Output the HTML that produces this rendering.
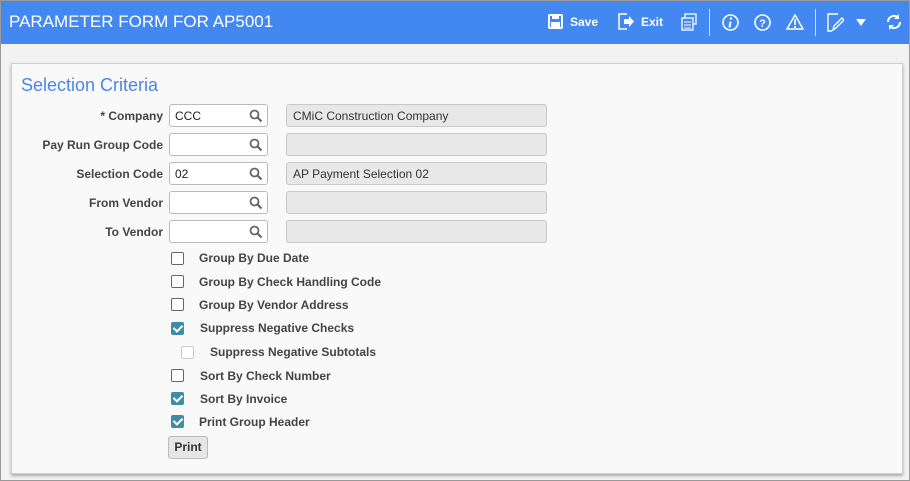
<!DOCTYPE html>
<html><head><style>
*{box-sizing:border-box;margin:0;padding:0}
body{width:910px;height:481px;background:#f2f2f2;font-family:"Liberation Sans",Arial,sans-serif;position:relative;overflow:hidden}
.frame{position:absolute;left:0;top:0;width:910px;height:481px;border:1px solid #999;z-index:5;pointer-events:none}
.hdr{position:absolute;left:0;top:0;width:910px;height:44px;background:#4288f0}
.title{position:absolute;left:9px;top:12px;color:#fff;font-size:17px}
.tb{position:absolute;color:#fff;font-weight:bold;font-size:12px;top:15px}
.sep{position:absolute;top:9px;width:1px;height:27px;background:#cfe0fb}
.panel{position:absolute;left:11px;top:63px;width:892px;height:411px;background:#f9f9f9;border:1px solid #d0d0d0;box-shadow:0 2px 3px #aaa}
.h2{position:absolute;left:21px;top:75px;font-size:18px;color:#4a86e8}
.lbl{position:absolute;right:747px;font-size:12px;font-weight:bold;color:#444}
.inp{position:absolute;left:169px;width:99px;height:23px;background:#fff;border:1px solid #bbb;border-radius:3px;font-size:12px;padding:4px 5px;color:#222}
.inp svg{position:absolute;right:4px;top:4px}
.ro{position:absolute;left:286px;width:261px;height:23px;background:#e8e8e8;border:1px solid #c8c8c8;border-radius:3px;font-size:12px;padding:4px 6px;color:#333}
.cb{position:absolute;left:171px;width:13px;height:13px;border:1px solid #666;border-radius:2px;background:#fff}
.cb.on{background:#3d8da8;border-color:#3d8da8}
.cb.dis{border-color:#ccc}
.cb.on:after{content:"";position:absolute;left:3px;top:0px;width:4px;height:7px;border:solid #fff;border-width:0 2px 2px 0;transform:rotate(45deg)}
.cl{position:absolute;left:199px;font-size:12px;font-weight:bold;color:#444}
.btn{position:absolute;left:168px;top:436px;width:40px;height:23px;border:1px solid #bbb;border-radius:3px;background:#e6e6e6;font-size:12px;font-weight:bold;color:#333;text-align:center;line-height:21px}
</style></head><body>
<div class="frame"></div>
<div class="hdr">
<div class="title">PARAMETER FORM FOR AP5001</div>
<svg style="position:absolute;left:548px;top:14px" width="15" height="15" viewBox="0 0 15 15"><rect x="1" y="1" width="13" height="13" rx="1" fill="none" stroke="#fff" stroke-width="2"/><rect x="4" y="1" width="7" height="4" fill="#fff"/><rect x="3" y="8" width="9" height="5" fill="#fff"/></svg>
<div class="tb" style="left:570px">Save</div>
<svg style="position:absolute;left:618px;top:13px" width="17" height="17" viewBox="0 0 17 17"><path d="M9 1H1v15h8" fill="none" stroke="#fff" stroke-width="1.5"/><path d="M6 6h5V3l5 5.5-5 5.5v-3H6z" fill="#fff"/></svg>
<div class="tb" style="left:641px">Exit</div>
<svg style="position:absolute;left:681px;top:13px" width="16" height="18" viewBox="0 0 16 18"><rect x="4" y="1" width="11" height="10" fill="none" stroke="#fff" stroke-width="1.3"/><rect x="1" y="5" width="11" height="12" fill="#4288f0" stroke="#fff" stroke-width="1.3"/><path d="M3 9h7M3 12h7M3 15h7" stroke="#fff"/></svg>
<div class="sep" style="left:709px"></div>
<svg style="position:absolute;left:722px;top:14px" width="17" height="17" viewBox="0 0 17 17"><circle cx="8.5" cy="8.5" r="7.5" fill="none" stroke="#fff" stroke-width="1.6"/><circle cx="9" cy="4.5" r="1.2" fill="#fff"/><path d="M8.5 7.5l-1 6" stroke="#fff" stroke-width="2"/></svg>
<svg style="position:absolute;left:754px;top:14px" width="17" height="17" viewBox="0 0 17 17"><circle cx="8.5" cy="8.5" r="7.5" fill="none" stroke="#fff" stroke-width="1.6"/><text x="8.5" y="13" text-anchor="middle" font-size="11" font-weight="bold" fill="#fff" font-family="Liberation Sans">?</text></svg>
<svg style="position:absolute;left:786px;top:14px" width="18" height="16" viewBox="0 0 18 16"><path d="M9 1L1 15h16z" fill="none" stroke="#fff" stroke-width="1.5"/><path d="M9 5v6M9 12v2" stroke="#fff" stroke-width="1.6"/></svg>
<div class="sep" style="left:815px"></div>
<svg style="position:absolute;left:827px;top:13px" width="17" height="19" viewBox="0 0 17 19"><path d="M11 1H1v17h4" fill="none" stroke="#fff" stroke-width="1.4"/><path d="M6 17l1-4 8-8 2 2-8 8z" fill="none" stroke="#fff" stroke-width="1.4"/></svg>
<svg style="position:absolute;left:856px;top:19px" width="10" height="7"><path d="M0 0h10L5 7z" fill="#fff"/></svg>
<svg style="position:absolute;left:885px;top:13px" width="18" height="18" viewBox="0 0 18 18"><path d="M3 9a6 6 0 0 1 10-4.5M15 9a6 6 0 0 1-10 4.5" fill="none" stroke="#fff" stroke-width="2"/><path d="M14 1v5h-5zM4 17v-5h5z" fill="#fff"/></svg>
</div>
<div class="panel"></div>
<div class="h2">Selection Criteria</div>
<div class="lbl" style="top:109px">* Company</div>
<div class="lbl" style="top:138px">Pay Run Group Code</div>
<div class="lbl" style="top:167px">Selection Code</div>
<div class="lbl" style="top:196px">From Vendor</div>
<div class="lbl" style="top:225px">To Vendor</div>
<div class="inp" style="top:104px">CCC<svg width="14" height="14"><circle cx="5.5" cy="5.5" r="4" fill="none" stroke="#666" stroke-width="1.8"/><path d="M8.5 8.5l4 4" stroke="#666" stroke-width="2.2"/></svg></div>
<div class="inp" style="top:133px"><svg width="14" height="14"><circle cx="5.5" cy="5.5" r="4" fill="none" stroke="#666" stroke-width="1.8"/><path d="M8.5 8.5l4 4" stroke="#666" stroke-width="2.2"/></svg></div>
<div class="inp" style="top:162px">02<svg width="14" height="14"><circle cx="5.5" cy="5.5" r="4" fill="none" stroke="#666" stroke-width="1.8"/><path d="M8.5 8.5l4 4" stroke="#666" stroke-width="2.2"/></svg></div>
<div class="inp" style="top:191px"><svg width="14" height="14"><circle cx="5.5" cy="5.5" r="4" fill="none" stroke="#666" stroke-width="1.8"/><path d="M8.5 8.5l4 4" stroke="#666" stroke-width="2.2"/></svg></div>
<div class="inp" style="top:220px"><svg width="14" height="14"><circle cx="5.5" cy="5.5" r="4" fill="none" stroke="#666" stroke-width="1.8"/><path d="M8.5 8.5l4 4" stroke="#666" stroke-width="2.2"/></svg></div>
<div class="ro" style="top:104px">CMiC Construction Company</div>
<div class="ro" style="top:133px"></div>
<div class="ro" style="top:162px">AP Payment Selection 02</div>
<div class="ro" style="top:191px"></div>
<div class="ro" style="top:220px"></div>
<div class="cb" style="top:252px"></div><div class="cl" style="top:251px">Group By Due Date</div>
<div class="cb" style="top:275px"></div><div class="cl" style="top:275px">Group By Check Handling Code</div>
<div class="cb" style="top:298px"></div><div class="cl" style="top:298px">Group By Vendor Address</div>
<div class="cb on" style="top:322px"></div><div class="cl" style="top:321px;left:200px">Suppress Negative Checks</div>
<div class="cb dis" style="top:346px;left:181px"></div><div class="cl" style="top:345px;left:210px">Suppress Negative Subtotals</div>
<div class="cb" style="top:369px"></div><div class="cl" style="top:369px;left:200px">Sort By Check Number</div>
<div class="cb on" style="top:392px"></div><div class="cl" style="top:392px;left:200px">Sort By Invoice</div>
<div class="cb on" style="top:415px"></div><div class="cl" style="top:415px">Print Group Header</div>
<div class="btn">Print</div>
</body></html>
